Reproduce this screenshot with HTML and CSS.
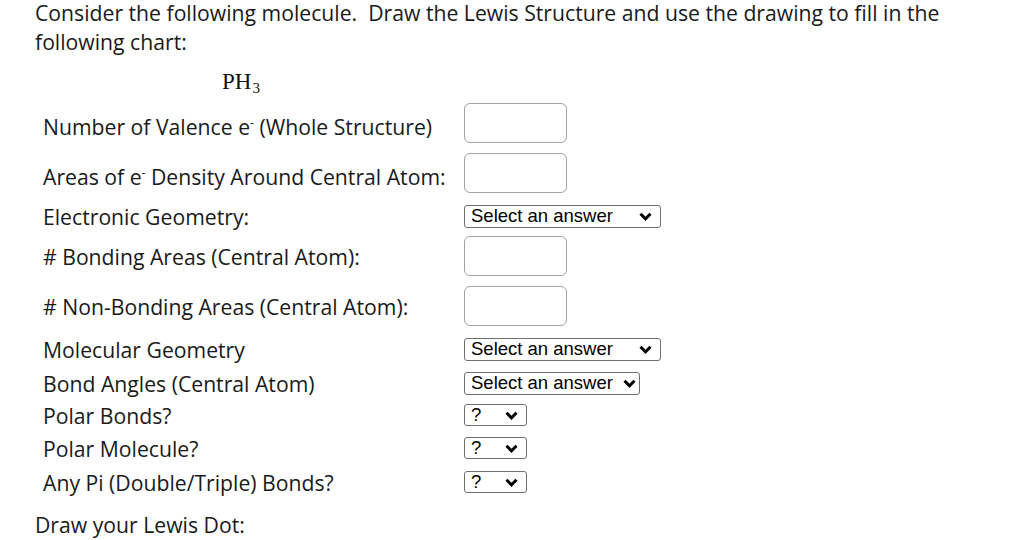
FILE: index.html
```html
<!DOCTYPE html>
<html>
<head>
<meta charset="utf-8">
<link rel="stylesheet" href="styles.css">
</head>
<body>
<div class="page">
  <p class="intro">Consider the following molecule.&nbsp; Draw the Lewis Structure and use the drawing to fill in the following chart:</p>
  <div class="formula">PH<sub>3</sub></div>
  <div class="chart">
    <div class="row r50"><span class="label">Number of Valence e<sup>-</sup> (Whole Structure)</span><span class="box up"></span></div>
    <div class="row r50"><span class="label">Areas of e<sup>-</sup> Density Around Central Atom:</span><span class="box up"></span></div>
    <div class="row r30"><span class="label">Electronic Geometry:</span><span class="sel w196"><span>Select an answer</span><svg viewBox="0 0 13 9" class="chev"><path d="M1.5 1.8 L6.5 6.8 L11.5 1.8" fill="none" stroke="#000" stroke-width="3"/></svg></span></div>
    <div class="row r50"><span class="label"># Bonding Areas (Central Atom):</span><span class="box"></span></div>
    <div class="row r50"><span class="label"># Non-Bonding Areas (Central Atom):</span><span class="box"></span></div>
    <div class="row r36"><span class="label">Molecular Geometry</span><span class="sel w196"><span>Select an answer</span><svg viewBox="0 0 13 9" class="chev"><path d="M1.5 1.8 L6.5 6.8 L11.5 1.8" fill="none" stroke="#000" stroke-width="3"/></svg></span></div>
    <div class="row r32"><span class="label">Bond Angles (Central Atom)</span><span class="sel w175"><span>Select an answer</span><svg viewBox="0 0 13 9" class="chev"><path d="M1.5 1.8 L6.5 6.8 L11.5 1.8" fill="none" stroke="#000" stroke-width="3"/></svg></span></div>
    <div class="row r32"><span class="label">Polar Bonds?</span><span class="sel w62 small"><span>?</span><svg viewBox="0 0 13 9" class="chev"><path d="M1.5 1.8 L6.5 6.8 L11.5 1.8" fill="none" stroke="#000" stroke-width="3"/></svg></span></div>
    <div class="row r34"><span class="label">Polar Molecule?</span><span class="sel w62 small"><span>?</span><svg viewBox="0 0 13 9" class="chev"><path d="M1.5 1.8 L6.5 6.8 L11.5 1.8" fill="none" stroke="#000" stroke-width="3"/></svg></span></div>
    <div class="row r34"><span class="label">Any Pi (Double/Triple) Bonds?</span><span class="sel w62 small"><span>?</span><svg viewBox="0 0 13 9" class="chev"><path d="M1.5 1.8 L6.5 6.8 L11.5 1.8" fill="none" stroke="#000" stroke-width="3"/></svg></span></div>
  </div>
  <p class="draw">Draw your Lewis Dot:</p>
</div>
</body>
</html>
```
FILE: styles.css
```css
html, body {
  margin: 0;
  padding: 0;
  background: #fff;
}
.page {
  font-family: "Open Sans", "Liberation Sans", sans-serif;
  color: #1a1a1a;
  padding-left: 35px;
  width: 960px;
}
.intro {
  margin: 0;
  font-size: 21.2px;
  line-height: 29px;
  margin-top: -2px;
}
.formula {
  font-family: "Liberation Serif", "DejaVu Serif", serif;
  font-size: 23px;
  color: #111;
  padding-left: 187px;
  height: 36px;
  line-height: 36px;
  margin-top: 8px;
}
.formula sub {
  font-size: 15px;
  vertical-align: -4px;
  margin-left: 1px;
}
.chart {
  padding-left: 8px;
  margin-top: 1px;
}
.row {
  display: flex;
  align-items: center;
}
.r50 { height: 50px; }
.r30 { height: 30px; }
.r36 { height: 36px; }
.r32 { height: 32px; }
.r34 { height: 34px; }
.label {
  width: 421px;
  font-size: 21.2px;
  white-space: nowrap;
}
.label sup {
  font-size: 12px;
  vertical-align: 8px;
  line-height: 0;
}
.box {
  display: block;
  width: 101px;
  height: 38px;
  border: 1.5px solid #a3a3a3;
  border-radius: 6px;
}
.box.up {
  margin-bottom: 6px;
}
.sel {
  display: flex;
  align-items: center;
  justify-content: space-between;
  box-sizing: border-box;
  height: 23px;
  border: 1px solid #6f6f6f;
  border-radius: 3px;
  font-family: "Liberation Sans", Arial, sans-serif;
  font-size: 18.5px;
  color: #000;
  padding: 0 8px 0 6px;
}
.w196 { width: 197px; }
.w175 { width: 176px; padding-right: 3px; }
.w62 { width: 63px; }
.small { height: 22px; padding-left: 6px; padding-right: 8px; }
.chev {
  width: 13px;
  height: 9px;
  flex: none;
}
.draw {
  margin: 0;
  margin-top: 13px;
  font-size: 21.2px;
  line-height: 26px;
}
```
